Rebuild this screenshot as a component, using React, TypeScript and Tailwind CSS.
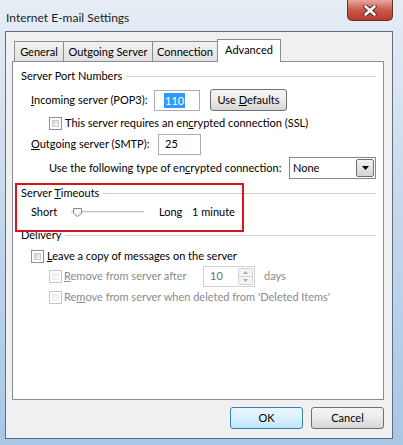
import React from 'react';

function Check({ disabled = false }: { disabled?: boolean }) {
  return (
    <span
      className={`inline-block w-[13px] h-[13px] shrink-0 border p-[2px] bg-white ${
        disabled ? 'border-[#c6c6c6]' : 'border-[#8e8f8f]'
      }`}
    >
      <span
        className={`block w-full h-full border bg-gradient-to-br ${
          disabled ? 'border-[#ececec] from-[#ededed] to-[#fbfbfb]' : 'border-[#c9c9c9] from-[#d3d3d3] to-[#f7f7f7]'
        }`}
      />
    </span>
  );
}

function GroupHeader({ children }: { children: React.ReactNode }) {
  return (
    <div className="flex items-center h-[14px] pl-[8px] pr-[7px]">
      <span className="whitespace-nowrap">{children}</span>
      <span className="flex-1 ml-[4px] border-t border-[#c9cfd4]" />
    </div>
  );
}

function WinButton({ children, focused = false, className = '' }: { children: React.ReactNode; focused?: boolean; className?: string }) {
  return (
    <div
      className={`flex items-center justify-center h-[22px] rounded-[3px] border whitespace-nowrap ${
        focused
          ? 'border-[#3c7fb1] bg-gradient-to-b from-[#eaf6fd] via-[#d9f0fc] to-[#bee6fd]'
          : 'border-[#707070] bg-gradient-to-b from-[#f4f4f4] via-[#ebebeb] to-[#d6d6d6]'
      } ${className}`}
    >
      {children}
    </div>
  );
}

function Tab({ label, selected = false, className = '' }: { label: string; selected?: boolean; className?: string }) {
  return (
    <div
      className={`flex justify-center whitespace-nowrap border border-b-0 border-[#898c95] ${
        selected
          ? 'h-[23px] -mb-px relative z-10 bg-white pt-[3px] -ml-px'
          : 'h-[20px] bg-gradient-to-b from-[#f2f2f2] to-[#e1e1e1] pt-[3px] items-start'
      } ${className}`}
    >
      {label}
    </div>
  );
}

export default function App() {
  return (
    <div className="w-[403px] h-[445px] overflow-hidden bg-gradient-to-b from-[#e6edf5] via-[#c3d7ec] to-[#a8c6e6] font-['Lato',sans-serif] text-[11px] text-black leading-[14px] relative">
      {/* title bar */}
      <div className="flex justify-between h-[31px]">
        <div className="pl-[6px] pt-[11px] text-[12px] leading-[14px] text-[#1e1e1e] whitespace-nowrap">Internet E-mail Settings</div>
        <div className="mr-[10px] w-[46px] h-[21px] rounded-b-[5px] border border-t-0 border-[#6b2d27] bg-gradient-to-b from-[#e6a79c] via-[#c9584a] to-[#b93a2c] flex items-center justify-center">
          <svg width="14" height="11" viewBox="0 0 14 11">
            <path d="M2.5 1.5 L11.5 9.5 M11.5 1.5 L2.5 9.5" stroke="#5a2019" strokeWidth="4.4" strokeLinecap="round" />
            <path d="M2.5 1.5 L11.5 9.5 M11.5 1.5 L2.5 9.5" stroke="#ffffff" strokeWidth="2.6" strokeLinecap="round" />
          </svg>
        </div>
      </div>

      {/* client area */}
      <div className="ml-[5px] w-[388px] h-[408px] border border-[#5f6e80] bg-[#f0f0f0]">
        <div className="ml-[6px] mt-[7px] w-[372px]">
          {/* tabs */}
          <div className="flex items-end h-[22px] pl-[2px]">
            <Tab label="General" className="w-[50px]" />
            <Tab label="Outgoing Server" className="w-[90px] -ml-px" />
            <Tab label="Connection" className="w-[66px] -ml-px" />
            <Tab label="Advanced" selected className="w-[64px]" />
          </div>

          {/* panel */}
          <div className="h-[339px] border border-[#898c95] bg-white flex flex-col pt-[7px] whitespace-nowrap">
            <GroupHeader>Server Port Numbers</GroupHeader>

            <div className="flex items-center h-[22px] mt-[6px] pl-[18px]">
              <span className="w-[123px]">
                <span className="underline">I</span>ncoming server (POP3):
              </span>
              <div className="w-[46px] h-[21px] border border-[#abadb3] flex items-center pl-[9px]">
                <span className="bg-[#3399ff] text-white px-[1px] leading-[15px]">110</span>
              </div>
              <WinButton className="w-[77px] ml-[10px]">
                <span>
                  Use <span className="underline">D</span>efaults
                </span>
              </WinButton>
            </div>

            <div className="flex items-center h-[20px] mt-[2px] pl-[36px] gap-[3px]">
              <Check />
              <span>
                This server requires an en<span className="underline">c</span>rypted connection (SSL)
              </span>
            </div>

            <div className="flex items-center h-[22px] pl-[18px]">
              <span className="w-[127px]">
                <span className="underline">O</span>utgoing server (SMTP):
              </span>
              <div className="w-[43px] h-[21px] border border-[#abadb3] flex items-center pl-[6px]">25</div>
            </div>

            <div className="flex items-center h-[22px] mt-[2px] pl-[36px]">
              <span className="w-[240px]">
                Use the following type of en<span className="underline">c</span>rypted connection:
              </span>
              <div className="w-[87px] h-[22px] border border-[#828790] flex items-center justify-between pl-[3px] pr-[1px]">
                <span>None</span>
                <div className="w-[18px] h-[18px] border border-[#707070] rounded-[2px] bg-gradient-to-b from-[#f2f2f2] to-[#d4d4d4] flex items-center justify-center">
                  <svg width="7" height="4" viewBox="0 0 7 4">
                    <path d="M0 0 H7 L3.5 4 Z" fill="#000" />
                  </svg>
                </div>
              </div>
            </div>

            <div className="mt-[7px]">
              <GroupHeader>
                Server <span className="underline">T</span>imeouts
              </GroupHeader>
            </div>

            <div className="flex items-center h-[20px] mt-[2px] pl-[18px]">
              <span className="w-[40px]">Short</span>
              <svg width="74" height="20" viewBox="0 0 74 20">
                <line x1="0" y1="9.5" x2="73" y2="9.5" stroke="#c4c4c4" strokeWidth="1" />
                <line x1="0" y1="10.5" x2="73" y2="10.5" stroke="#ebebeb" strokeWidth="1" />
                <path d="M2.5 6.5 H10.5 V11.5 L6.5 14.5 L2.5 11.5 Z" fill="#f6f6f6" stroke="#8a8a8a" strokeWidth="1" />
              </svg>
              <span className="ml-[14px] w-[33px]">Long</span>
              <span>1 minute</span>
            </div>

            <div className="mt-[6px]">
              <GroupHeader>Delivery</GroupHeader>
            </div>

            <div className="flex items-center h-[20px] mt-[4px] pl-[18px] gap-[3px]">
              <Check />
              <span>
                <span className="underline">L</span>eave a copy of messages on the server
              </span>
            </div>

            <div className="flex items-center h-[20px] pl-[36px] text-[#8b8b8b]">
              <Check disabled />
              <span className="w-[141px] pl-[2px]">
                <span className="underline">R</span>emove from server after
              </span>
              <div className="w-[52px] h-[21px] border border-[#cfd1d6] flex items-center justify-between pl-[6px] pr-[1px] text-[#6d6d6d]">
                <span>10</span>
                <div className="flex flex-col w-[15px] h-[17px]">
                  <div className="flex-1 border border-[#d3d3d3] rounded-t-[2px] bg-[#f4f4f4] flex items-center justify-center">
                    <svg width="5" height="3" viewBox="0 0 5 3">
                      <path d="M0 3 H5 L2.5 0 Z" fill="#a8a8a8" />
                    </svg>
                  </div>
                  <div className="flex-1 border border-t-0 border-[#d3d3d3] rounded-b-[2px] bg-[#f4f4f4] flex items-center justify-center">
                    <svg width="5" height="3" viewBox="0 0 5 3">
                      <path d="M0 0 H5 L2.5 3 Z" fill="#a8a8a8" />
                    </svg>
                  </div>
                </div>
              </div>
              <span className="ml-[9px]">days</span>
            </div>

            <div className="flex items-center h-[20px] mt-[1px] pl-[36px] text-[#8b8b8b]">
              <Check disabled />
              <span className="pl-[2px]">
                Re<span className="underline">m</span>ove from server when deleted from 'Deleted Items'
              </span>
            </div>
          </div>

          {/* buttons */}
          <div className="flex justify-end gap-[8px] mt-[7px]">
            <WinButton focused className="w-[73px]">OK</WinButton>
            <WinButton className="w-[73px]">Cancel</WinButton>
          </div>
        </div>
      </div>

      {/* red annotation box over the Server Timeouts group */}
      <div className="absolute left-[15px] top-[183px] w-[229px] h-[49px] border-2 border-[#d9141c] pointer-events-none" />
    </div>
  );
}
